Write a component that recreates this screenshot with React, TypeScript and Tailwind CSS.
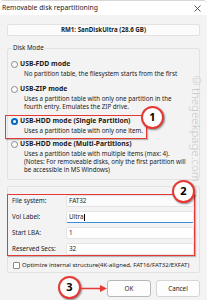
import { ReactNode } from "react";

const FONT = { fontFamily: '"Noto Sans", "Open Sans", Arial, sans-serif' };

function Radio({ checked }: { checked?: boolean }) {
  if (checked) {
    return (
      <span className="w-[7px] h-[7px] rounded-full bg-[#0067c0] flex items-center justify-center shrink-0">
        <span className="w-[3px] h-[3px] rounded-full bg-white" />
      </span>
    );
  }
  return <span className="w-[7px] h-[7px] rounded-full border border-[#8a8a8a] bg-[#fbfbfb] shrink-0" />;
}

function Option({
  title,
  lines,
  checked,
  className,
}: {
  title: string;
  lines: string[];
  checked?: boolean;
  className?: string;
}) {
  return (
    <div className={className}>
      <div className="h-[10px] flex items-center gap-[2px]">
        <Radio checked={checked} />
        <span className="text-[6.8px] font-bold text-[#1b1b1b] leading-none">{title}</span>
      </div>
      <div className="mt-[1px] ml-[13px] text-[6.2px] leading-[8px] text-[#1b1b1b]">
        {lines.map((l) => (
          <div key={l} className="whitespace-nowrap">{l}</div>
        ))}
      </div>
    </div>
  );
}

function Field({ label, children }: { label: string; children: ReactNode }) {
  return (
    <div className="h-[12px] flex items-center">
      <span className="w-[54px] text-[6.3px] text-[#1b1b1b]">{label}</span>
      {children}
    </div>
  );
}

function Badge({ n, className }: { n: string; className: string }) {
  return (
    <div
      className={`absolute w-[23px] h-[23px] rounded-full bg-white border-[2px] border-[#e53935] shadow-[1px_1px_2px_rgba(0,0,0,0.45)] flex items-center justify-center text-[11px] font-bold text-black ${className}`}
    >
      {n}
    </div>
  );
}

export default function App() {
  return (
    <div style={FONT} className="relative w-[207px] h-[300px] overflow-hidden bg-[#f3f3f3] rounded-t-[4px] border-t border-[#d8d8d8]">
      {/* ── Title bar ── */}
      <div className="h-[14px] bg-white flex items-center justify-between pl-[2px] pr-[6px]">
        <span className="text-[6.8px] text-[#1b1b1b]">Removable disk repartitioning</span>
        <svg width="7" height="7" viewBox="0 0 7 7">
          <path d="M0.5 0.5L6.5 6.5M6.5 0.5L0.5 6.5" stroke="#333" strokeWidth="0.8" />
        </svg>
      </div>

      <div className="px-[7px]">
        {/* ── Disk header ── */}
        <div className="mt-[9px] h-[12px] border border-[#e2e2e2] bg-[#fbfbfb] rounded-[2px] flex items-center justify-center">
          <span className="text-[6.2px] font-bold text-[#1b1b1b]">RM1: SanDiskUltra (28.6 GB)</span>
        </div>

        {/* ── Disk Mode ── */}
        <fieldset className="mt-[8px] border border-[#e2e2e2] rounded-[2px] pl-[3px] pt-[7px] pb-[5px]">
          <legend className="ml-[1px] px-[1px] text-[6.2px] leading-[8px] text-[#1b1b1b]">Disk Mode</legend>
          <Option title="USB-FDD mode" lines={["No partition table, the filesystem starts from the first"]} />
          <Option
            className="mt-[6px]"
            title="USB-ZIP mode"
            lines={["Uses a partition table with only one partition in the", "fourth entry. Emulates the ZIP drive."]}
          />
          <Option
            className="mt-[5px]"
            checked
            title="USB-HDD mode (Single Partition)"
            lines={["Uses a partition table with only one item."]}
          />
          <Option
            className="mt-[4px]"
            title="USB-HDD mode (Multi-Partitions)"
            lines={[
              "Uses a partition table with multiple items (max: 4).",
              "(Notes: For removeable disks, only the first partition will",
              "be accessible in MS Windows)",
            ]}
          />
        </fieldset>

        {/* ── Format options ── */}
        <div className="mt-[6px] border border-[#e2e2e2] rounded-[2px] pl-[4px] pr-[5px] pt-[8px] pb-[3px]">
          <div className="flex flex-col gap-[4px]">
            <Field label="File system:">
              <div className="flex-1 h-[12px] bg-[#fbfbfb] border border-[#e2e2e2] rounded-[2px] flex items-center justify-between px-[2px]">
                <span className="text-[6.3px] text-[#1b1b1b]">FAT32</span>
                <svg width="5" height="4" viewBox="0 0 5 4">
                  <path d="M0.5 1L2.5 3L4.5 1" stroke="#666" strokeWidth="0.7" fill="none" />
                </svg>
              </div>
            </Field>
            <Field label="Vol Label:">
              <div className="flex-1 h-[12px] bg-white border border-[#e5e5e5] border-b-[1.5px] border-b-[#3a8ed8] rounded-[2px] flex items-center px-[2px]">
                <span className="text-[6.3px] text-[#1b1b1b]">Ultra</span>
                <span className="w-[0.6px] h-[7px] bg-black" />
              </div>
            </Field>
            <Field label="Start LBA:">
              <div className="flex-1 h-[12px] bg-white border border-[#e5e5e5] rounded-[2px] flex items-center px-[2px]">
                <span className="text-[6.3px] text-[#1b1b1b]">1</span>
              </div>
            </Field>
            <Field label="Reserved Secs:">
              <div className="flex-1 h-[12px] bg-white border border-[#e5e5e5] rounded-[2px] flex items-center px-[2px]">
                <span className="text-[6.3px] text-[#1b1b1b]">32</span>
              </div>
            </Field>
          </div>
          <div className="mt-[6px] h-[8px] flex items-center gap-[2px] ml-[1px]">
            <span className="w-[7px] h-[7px] border border-[#8a8a8a] rounded-[1px] bg-white shrink-0" />
            <span className="text-[6px] text-[#1b1b1b] whitespace-nowrap">
              Optimize internal structure(4K-aligned, FAT16/FAT32/EXFAT)
            </span>
          </div>
        </div>

        {/* ── Buttons ── */}
        <div className="mt-[7px] flex justify-end gap-[5px]">
          <button type="button" className="w-[44px] h-[17px] rounded-[3px] bg-[#fdfdfd] border border-[#b8b8b8] text-[6.3px] text-[#1b1b1b]">
            OK
          </button>
          <button type="button" className="w-[44px] h-[17px] rounded-[3px] bg-[#fdfdfd] border border-[#d5d5d5] text-[6.3px] text-[#1b1b1b]">
            Cancel
          </button>
        </div>
      </div>

      {/* ── Annotations ── */}
      <div className="absolute left-[5px] top-[114px] w-[142px] h-[24px] border-[1.5px] border-[#e53935] shadow-[1px_1px_1px_rgba(0,0,0,0.25)]" />
      <div className="absolute left-[7px] top-[193px] w-[188px] h-[62px] border-[1.5px] border-[#e53935] shadow-[1px_1px_1px_rgba(0,0,0,0.25)]" />
      <Badge n="1" className="left-[141px] top-[105px]" />
      <Badge n="2" className="left-[172px] top-[179px]" />
      <Badge n="3" className="left-[58px] top-[275px]" />
      <svg className="absolute left-[81px] top-[283px]" width="27" height="9" viewBox="0 0 27 9">
        <path d="M0 4.5H21" stroke="#e53935" strokeWidth="1.5" />
        <path d="M19 1L26 4.5L19 8Z" fill="#e53935" />
      </svg>

      {/* ── Watermark ── */}
      <div className="absolute left-[188px] top-[72px] [writing-mode:vertical-rl] text-[11.5px] font-light text-[#c8c8c8] whitespace-nowrap">
        ©thegeekpage.com
      </div>
    </div>
  );
}
